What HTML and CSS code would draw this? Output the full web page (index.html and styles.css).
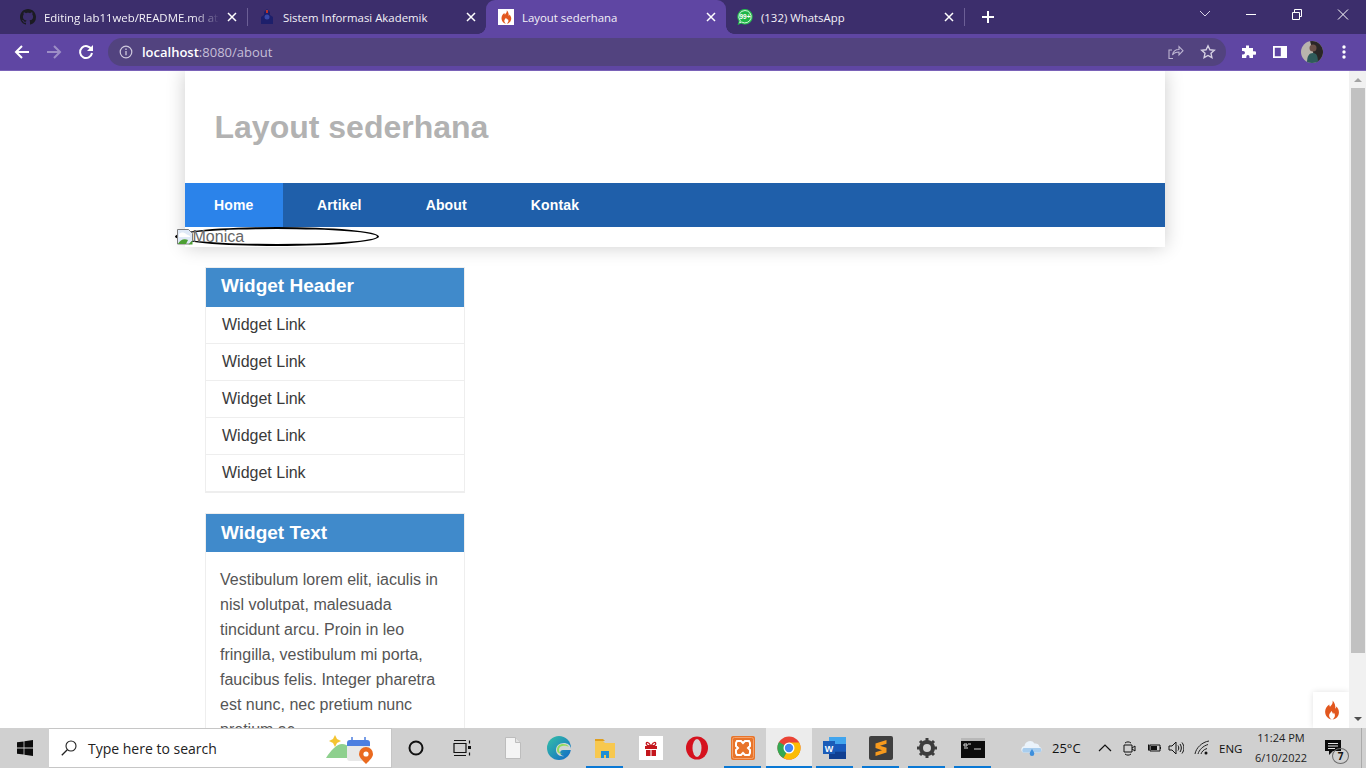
FILE: index.html
```html
<!DOCTYPE html>
<html lang="en">
<head>
<meta charset="utf-8">
<title>Layout sederhana</title>
<link rel="stylesheet" href="styles.css">
</head>
<body>
<svg class="sprite" aria-hidden="true">
  <symbol id="flame" viewBox="0 0 16 18">
    <path fill="#e2571e" d="M9 0c.6 3-1.200 4.400-2.400 6-.5-.8-.7-1.400-.7-2.200C3.400 5.600 2 8 2 10.600 2 14.500 5 17.500 8.300 18c-1.700-1-2.800-2.600-2.500-4.300.3-1.500 1.500-2.300 2.100-3.700 1 1 .9 2 1.700 2.800.4-.5.500-1 .5-1.500 1.100 1.300 1.400 2.700.9 4-.4 1-1.100 1.700-2.100 2.700C12.600 17.500 15 14.500 15 11c0-2.600-1.400-4.200-2.400-5.400-.1 1-.4 1.700-1 2.200C11.900 4.800 11 2 9 0z"/>
  </symbol>
  <symbol id="x" viewBox="0 0 10 10">
    <path d="M1 1l8 8M9 1L1 9" fill="none" stroke="currentColor" stroke-width="1.500"/>
  </symbol>
</svg>

<div class="screen">
  <header class="browser">
    <div class="tabstrip">
      <div class="tab">
        <svg class="fav" viewBox="0 0 16 16"><path fill="#1b1b22" d="M8 0C3.580 0 0 3.580 0 8c0 3.540 2.290 6.530 5.470 7.590.4.070.55-.17.55-.38 0-.19-.01-.82-.01-1.490-2.010.37-2.530-.49-2.690-.94-.09-.23-.48-.94-.82-1.130-.28-.15-.68-.52-.01-.53.63-.01 1.080.58 1.230.82.720 1.210 1.870.870 2.330.66.070-.52.280-.87.510-1.070-1.780-.2-3.640-.89-3.640-3.950 0-.87.310-1.590.820-2.150-.08-.2-.36-1.020.08-2.120 0 0 .67-.21 2.200.82.640-.18 1.320-.27 2-.27s1.360.09 2 .27c1.530-1.040 2.200-.82 2.200-.82.440 1.100.160 1.920.080 2.120.510.560.820 1.270.820 2.150 0 3.070-1.870 3.750-3.650 3.950.290.250.540.730.540 1.480 0 1.070-.01 1.930-.01 2.200 0 .21.150.460.550.380A8.013 8.013 0 0 0 16 8c0-4.420-3.580-8-8-8z"/></svg>
        <span class="tab-title fade">Editing lab11web/README.md at master</span>
        <svg class="tab-x"><use href="#x"/></svg>
      </div>
      <i class="tab-sep"></i>
      <div class="tab">
        <svg class="fav" viewBox="0 0 16 16"><path fill="#1d1f6b" d="M8 0l3 3v3l3 2v7H2V8l3-2V3z"/><circle cx="8" cy="8" r="2.500" fill="#3848a8"/><path fill="#b8322c" d="M7 1h2v3H7z"/></svg>
        <span class="tab-title">Sistem Informasi Akademik</span>
        <svg class="tab-x"><use href="#x"/></svg>
      </div>
      <div class="tab tab-active">
        <span class="fav fav-white"><svg class="fav-flame"><use href="#flame"/></svg></span>
        <span class="tab-title">Layout sederhana</span>
        <svg class="tab-x"><use href="#x"/></svg>
      </div>
      <div class="tab tab-after">
        <svg class="fav" viewBox="0 0 16 16"><path d="M8 0a7.700 7.700 0 0 1 0 15.400c-1.400 0-2.700-.4-3.800-1L.6 16l1.200-3.800A7.700 7.700 0 0 1 8 0z" fill="#25c04e"/><path d="M8 1.500a6.200 6.200 0 1 1-3.300 11.500l-2 .7.600-2A6.200 6.200 0 0 1 8 1.500z" fill="#1fb548" stroke="#fff" stroke-width=".8"/><text x="8" y="10" class="wa-text">99+</text></svg>
        <span class="tab-title">(132) WhatsApp</span>
        <svg class="tab-x"><use href="#x"/></svg>
      </div>
      <i class="tab-sep tab-sep-end"></i>
      <svg class="newtab" viewBox="0 0 14 14"><path d="M7 1v12M1 7h12" fill="none" stroke="#fff" stroke-width="2"/></svg>
      <div class="winctl">
        <svg viewBox="0 0 46 30"><path d="M18 11l5 5 5-5" fill="none" stroke="#d8d3e6" stroke-width="1"/></svg>
        <svg viewBox="0 0 46 30"><path d="M18 14.500h10" stroke="#fff" stroke-width="1"/></svg>
        <svg viewBox="0 0 46 30"><path d="M18.500 12.500h7v7h-7zM20.500 12v-2.500h7v7H26" fill="none" stroke="#fff" stroke-width="1"/></svg>
        <svg viewBox="0 0 46 30"><path d="M18 9.500l10 10M28 9.500l-10 10" stroke="#fff" stroke-width="1"/></svg>
      </div>
    </div>
    <div class="toolbar">
      <svg class="tb-icon" viewBox="0 0 16 16"><path d="M15 8H2M8 2L2 8l6 6" fill="none" stroke="#fff" stroke-width="2"/></svg>
      <svg class="tb-icon" viewBox="0 0 16 16"><path d="M1 8h13M8 2l6 6-6 6" fill="none" stroke="#9d8ec6" stroke-width="2"/></svg>
      <svg class="tb-icon" viewBox="0 0 16 16"><path d="M13.500 5.500A6 6 0 1 0 14 9" fill="none" stroke="#fff" stroke-width="2"/><path d="M15 1v6H9z" fill="#fff"/></svg>
      <div class="omnibox">
        <svg class="omni-info" viewBox="0 0 14 14"><circle cx="7" cy="7" r="5.800" fill="none" stroke="#cfc9dd" stroke-width="1.200"/><path d="M7 6v4.200M7 3.600v1.300" stroke="#cfc9dd" stroke-width="1.300"/></svg>
        <span class="url"><b>localhost</b>:8080/about</span>
        <svg class="omni-act" viewBox="0 0 16 16"><path d="M5 14.500H1V6h3M4.500 11c.6-3.500 3-5.500 6.500-5.500V2.500l4 4.200-4 4.200V8c-3 0-5 .8-6.500 3z" fill="none" stroke="#bdb5d2" stroke-width="1.100"/></svg>
        <svg class="omni-act" viewBox="0 0 16 16"><path d="M8 1.800l1.900 4 4.400.5-3.300 3 .9 4.400L8 11.500l-3.900 2.200.9-4.400-3.300-3 4.400-.5z" fill="none" stroke="#d6d1e3" stroke-width="1.400"/></svg>
      </div>
      <svg class="tb-icon" viewBox="0 0 16 16"><path fill="#fff" d="M6 1.500h3V4h4v3.200h1.500a1.800 1.800 0 0 1 0 3.600H13V14H9.500v-1.300a1.600 1.600 0 0 0-3.200 0V14H2v-3.500h1.200a1.800 1.800 0 0 0 0-3.600H2V4h4z"/></svg>
      <svg class="tb-icon" viewBox="0 0 16 16"><path fill="#fff" fill-rule="evenodd" d="M1 2h14v12H1zM2.800 3.800v8.400h6V3.800z"/></svg>
      <span class="avatar"><svg viewBox="0 0 22 22"><rect width="22" height="22" fill="#b9b4ad"/><path d="M9 0h13v22H15z" fill="#2a2626"/><path d="M6 22c0-7 2-10 6-10s5 4 5 10z" fill="#2e5b5a"/><circle cx="12" cy="7" r="3.500" fill="#6b5148"/></svg></span>
      <svg class="tb-icon" viewBox="0 0 16 16"><g fill="#fff"><circle cx="8" cy="3" r="1.700"/><circle cx="8" cy="8" r="1.700"/><circle cx="8" cy="13" r="1.700"/></g></svg>
    </div>
  </header>

  <div class="viewport">
    <main class="page">
      <div class="container">
        <div class="site-head"><h1>Layout sederhana</h1></div>
        <nav class="site-nav">
          <a class="active">Home</a>
          <a>Artikel</a>
          <a>About</a>
          <a>Kontak</a>
        </nav>
        <div class="hero">
          <div class="broken">
            <svg class="broken-ico" viewBox="0 0 16 16"><path d="M.5.500h11l4 4v7l-3 3.500H.5z" fill="#dfe9f7" stroke="#7d7d7d"/><path d="M2 5c2-2 5-2 7 0 1 1 3 1 4 2v1H2z" fill="#fff"/><path d="M1 15c2-4 6-6 10-4l-2 4z" fill="#4c9f32"/><path d="M11.500 15.500l4-4v4z" fill="#4c9f32"/></svg>
            <span>Monica</span>
          </div>
        </div>
      </div>
      <aside class="sidebar">
        <section class="widget widget-links">
          <h3 class="widget-title">Widget Header</h3>
          <ul class="links">
            <li>Widget Link</li>
            <li>Widget Link</li>
            <li>Widget Link</li>
            <li>Widget Link</li>
            <li>Widget Link</li>
          </ul>
        </section>
        <section class="widget widget-text">
          <h3 class="widget-title">Widget Text</h3>
          <p>Vestibulum lorem elit, iaculis in nisl volutpat, malesuada tincidunt arcu. Proin in leo fringilla, vestibulum mi porta, faucibus felis. Integer pharetra est nunc, nec pretium nunc pretium ac.</p>
        </section>
      </aside>
      <div class="ci-badge"><svg><use href="#flame"/></svg></div>
    </main>
    <div class="scrollbar">
      <i class="arrow arrow-up"></i>
      <div class="track"><div class="thumb"></div></div>
      <i class="arrow arrow-down"></i>
    </div>
  </div>

  <footer class="taskbar">
    <div class="start"><svg viewBox="0 0 16 16"><path fill="#0c0c0c" d="M0 2.300l6.600-.9v6.200H0zM7.400 1.300L16 0v7.600H7.400zM0 8.400h6.600v6.200L0 13.700zM7.400 8.400H16V16l-8.600-1.200z"/></svg></div>
    <div class="search">
      <svg class="search-ico" viewBox="0 0 16 16"><circle cx="10" cy="6" r="5" fill="none" stroke="#222" stroke-width="1.100"/><path d="M6.300 9.700L.8 15.200" stroke="#222" stroke-width="1.300"/></svg>
      <span class="search-text">Type here to search</span>
      <svg class="search-art" viewBox="0 0 50 32"><path d="M0 26c5-8 11-14 16-14 6 0 11 6 14 14z" fill="#8ed08e"/><path d="M7 7l2-4 2 4 4 2-4 2-2 4-2-4-4-2z" fill="#f4c430"/><rect x="21" y="8" width="23" height="21" rx="3" fill="#e8e8e8"/><path d="M21 11a3 3 0 0 1 3-3h17a3 3 0 0 1 3 3v3H21z" fill="#4c7fe0"/><path d="M26 5v5M39 5v5" stroke="#4c7fe0" stroke-width="1.500"/><path d="M40 32c-4-4-7-7-7-10a7 7 0 0 1 14 0c0 3-3 6-7 10z" fill="#ea6a1f"/><circle cx="40" cy="22" r="2.600" fill="#fff"/></svg>
    </div>
    <div class="tb-items">
      <div class="item"><svg viewBox="0 0 24 24"><circle cx="12" cy="12" r="6.500" fill="none" stroke="#111" stroke-width="2"/></svg></div>
      <div class="item"><svg viewBox="0 0 24 24"><path d="M4 7.500h12v9H4zM4 4.500h12M4 19.500h12M19.500 4.500v3M19.500 16.500v3" fill="none" stroke="#111" stroke-width="1.200"/><rect x="18" y="10" width="3" height="3" fill="#111"/></svg></div>
      <div class="item item-gap"><svg viewBox="0 0 24 24"><path d="M4.500 1.500h10l5 5v16h-15z" fill="#f4f4f4" stroke="#bdbdbd"/><path d="M14.500 1.500v5h5" fill="#e2e2e2" stroke="#bdbdbd"/></svg></div>
      <div class="item"><svg viewBox="0 0 24 24"><defs><linearGradient id="edge" x1="0" y1="0" x2="1" y2="1"><stop offset="0" stop-color="#35c1a6"/><stop offset="1" stop-color="#1068c8"/></linearGradient></defs><circle cx="12" cy="12" r="12" fill="url(#edge)"/><path d="M24 13c0-4-4-6-7-6-5 0-8 3-8 7 0 4 4 7 8 6-5 0-5-6-1-6h8z" fill="#d4d4d4"/><path d="M10 14c0-4 3-6 6-6 3 0 5 1 6 3-1-1-10-3-10 3 0 2 2 4 4 4-3 0-6-1-6-4z" fill="#8fdc5c"/></svg></div>
      <div class="item item-open"><svg viewBox="0 0 24 24"><path d="M2 5h8l2 2h10v15H2z" fill="#f7c84f"/><path d="M2 3h8l2 2H2z" fill="#e09f1e"/><path d="M8 22v-7h8v7h-3v-3h-2v3z" fill="#1f8fd6"/></svg></div>
      <div class="item"><svg viewBox="0 0 24 24"><rect width="24" height="24" fill="#fff"/><path d="M6 10h12v3H6zM7 14h4.500v6H7zM12.500 14H17v6h-4.500z" fill="#c4161c"/><path d="M12 10C9 5 6.500 6 7.500 8.500 8.200 10 12 10 12 10zm0 0c3-5 5.500-4 4.500-1.500C15.800 10 12 10 12 10z" fill="none" stroke="#c4161c" stroke-width="1.300"/></svg></div>
      <div class="item"><svg viewBox="0 0 24 24"><ellipse cx="12" cy="12" rx="11" ry="11.500" fill="#d5121e"/><ellipse cx="12" cy="12" rx="4.500" ry="9" fill="#d4d4d4"/></svg></div>
      <div class="item item-open"><svg viewBox="0 0 24 24"><rect width="24" height="24" rx="2" fill="#e8742a"/><rect x="1.500" y="1.500" width="21" height="21" rx="2" fill="none" stroke="#f5a36c"/><path d="M6 5h4l2 2 2-2h4l1 2v3l-2 2 2 2v3l-1 2h-4l-2-2-2 2H6l-1-2v-3l2-2-2-2V7z" fill="none" stroke="#fff" stroke-width="2"/></svg></div>
      <div class="item item-active item-open"><svg viewBox="0 0 24 24"><circle cx="12" cy="12" r="11.500" fill="#ea4335"/><path d="M12 12L22 18A11.500 11.500 0 0 1 6.300 22z" fill="#fbbc05"/><path d="M12 12L6.500 22A11.500 11.500 0 0 1 2 6z" fill="#34a853"/><path d="M12 6.500h10.200A11.500 11.500 0 0 1 18 21.800L12 12z" fill="#fbbc05"/><circle cx="12" cy="12" r="5.500" fill="#fff"/><circle cx="12" cy="12" r="4.200" fill="#4285f4"/></svg></div>
      <div class="item item-open"><svg viewBox="0 0 24 24"><path d="M6 1h17v22H6z" fill="#2b7cd3"/><path d="M6 8h17v7.500H6z" fill="#185abd"/><path d="M6 15.500h17V23H6z" fill="#103f91"/><path d="M6 1h17v7H6z" fill="#41a5ee"/><rect x="0" y="5" width="12" height="13" fill="#1a5cb8"/><text x="6" y="15.500" class="w-letter">W</text></svg></div>
      <div class="item item-open"><svg viewBox="0 0 24 24"><rect width="24" height="24" rx="2" fill="#3f3f3f"/><path d="M17.500 4L6.500 7.500V12L13 14.200 6.500 16.300V20L17.500 16.500V11.800L11 9.700 17.500 7.700z" fill="#f79a1d"/></svg></div>
      <div class="item item-open"><svg viewBox="0 0 24 24"><circle cx="12" cy="12" r="6" fill="none" stroke="#3d3d3d" stroke-width="4"/><path d="M12 2v4M12 18v4M2 12h4M18 12h4M5 5l3 3M16 16l3 3M19 5l-3 3M8 16l-3 3" stroke="#3d3d3d" stroke-width="3"/></svg></div>
      <div class="item item-open"><svg viewBox="0 0 24 24"><rect y="2" width="24" height="20" fill="#0c0c0c"/><rect y="2" width="24" height="3" fill="#b8b8b8"/><path d="M3 8h3v2H3zM7 8h3M3 12h4M13 13h7" stroke="#d8d8d8" fill="none"/></svg></div>
    </div>
    <div class="tray">
      <svg class="tray-weather" viewBox="0 0 22 18"><path d="M2 13.500a3.500 3.500 0 0 1 1.500-6.500 5.500 5.500 0 0 1 10-2.500 4.500 4.500 0 0 1 5 3.200 3.200 3.200 0 0 1 .5 5.800z" fill="#eaf3fb"/><path d="M2 13.500a3.500 3.500 0 0 1 .5-4.500h17a3.200 3.200 0 0 1-.5 4.500z" fill="#a8cdee"/><path d="M11 10c1.800 2.800 2.300 3.600 2.300 4.700a2.300 2.300 0 0 1-4.600 0c0-1.100.5-1.900 2.300-4.700z" fill="#3d8fdc"/></svg>
      <span class="temp">25°C</span>
      <svg class="tray-ico tray-chev" viewBox="0 0 16 16"><path d="M2 11l6-6 6 6" fill="none" stroke="#111" stroke-width="1.200"/></svg>
      <svg class="tray-ico" viewBox="0 0 16 16"><path d="M3 5h8v7H3zM11 8l3-2v5l-3-2M4 3c2-1.500 4-1.500 6 0M4 14c2 1.500 4 1.500 6 0" fill="none" stroke="#111" stroke-width="1"/></svg>
      <svg class="tray-ico" viewBox="0 0 16 16"><path d="M5 5h10v6H5z" fill="none" stroke="#111"/><path d="M6 6h6v4H6zM15 7h1v2h-1zM0 6h3M0 9h3M3 4.500h1.500v6H3z" fill="#111"/></svg>
      <svg class="tray-ico tray-vol" viewBox="0 0 16 16"><path d="M1 6h3l4-4v12l-4-4H1zM10 5.500c1 1.500 1 3.500 0 5M12 4c1.800 2.500 1.800 5.500 0 8M14 2.500c2.500 3.500 2.500 7.500 0 11" fill="none" stroke="#111"/></svg>
      <svg class="tray-ico tray-wifi" viewBox="0 0 16 16"><path d="M1 14C2 8 8 2 15 1M4 14c1-4 5-8 10-9.500M7 14c.6-2 2.500-4.500 6-5.500" fill="none" stroke="#222"/><circle cx="12" cy="13" r="1.500" fill="#111"/></svg>
      <span class="lang">ENG</span>
      <div class="clock"><span>11:24 PM</span><span>6/10/2022</span></div>
      <div class="notif">
        <svg viewBox="0 0 16 16"><path d="M0 0h16v11H8l-4 4v-4H0z" fill="#0b0b0b"/><path d="M3 3.500h10M3 6h10M3 8.500h7" stroke="#e4e4e4"/></svg>
        <span class="notif-badge">7</span>
      </div>
      <i class="show-desktop"></i>
    </div>
  </footer>
</div>
</body>
</html>
```

FILE: styles.css
```css
* { box-sizing: border-box; }
html, body { margin: 0; padding: 0; height: 100%; overflow: hidden; }
body { font-family: "Liberation Sans", Arial, sans-serif; background: #fff; color: #333; }
.sprite { display: none; }
.screen { width: 1366px; height: 768px; display: flex; flex-direction: column; overflow: hidden; }

/* browser chrome */
.browser { flex: 0 0 71px; display: flex; flex-direction: column; font-family: "Open Sans", "Noto Sans", sans-serif; }
.tabstrip { flex: 0 0 34px; background: #3c2e6c; display: flex; align-items: flex-end; padding-left: 8px; position: relative; color: #fff; }
.tab { width: 239px; height: 34px; display: flex; align-items: center; padding: 0 10px 0 12px; gap: 8px; flex: 0 0 auto; }
.tab-active { background: #5f46a3; border-radius: 9px 9px 0 0; width: 240px; position: relative; }
.tab-active::before, .tab-active::after { content: ""; position: absolute; bottom: 0; width: 8px; height: 8px; }
.tab-active::before { left: -8px; background: radial-gradient(circle at 0 0, transparent 7.500px, #5f46a3 8px); }
.tab-active::after { right: -8px; background: radial-gradient(circle at 100% 0, transparent 7.500px, #5f46a3 8px); }
.tab-after { width: 238px; padding-left: 11px; }
.fav { width: 16px; height: 16px; flex: 0 0 16px; display: block; }
.fav-white { background: #fff; display: flex; align-items: center; justify-content: center; }
.fav-flame { width: 12px; height: 14px; }
.wa-text { font: 700 6.500px "Liberation Sans", sans-serif; fill: #fff; text-anchor: middle; }
.tab-title { flex: 1; font-size: 11.400px; white-space: nowrap; overflow: hidden; color: #f3f1f8; min-width: 0; }
.fade { -webkit-mask-image: linear-gradient(90deg, #000 150px, transparent 176px); mask-image: linear-gradient(90deg, #000 150px, transparent 176px); }
.tab-x { width: 10px; height: 10px; flex: 0 0 10px; color: #fff; }
.tab-sep { width: 1px; height: 18px; background: #6c5f96; align-self: center; margin-right: -1px; flex: 0 0 1px; }
.tab-sep-end { margin-right: 0; }
.newtab { width: 14px; height: 14px; margin: 0 0 10px 16px; flex: 0 0 14px; }
.winctl { margin-left: auto; display: flex; align-self: flex-start; }
.winctl svg { width: 46px; height: 30px; display: block; }
.toolbar { flex: 0 0 37px; background: #5f46a3; border-bottom: 1px solid #7a62b8; display: flex; align-items: flex-start; padding-top: 4px; }
.tb-icon { width: 16px; height: 16px; flex: 0 0 16px; margin: 6px 8px; }
.toolbar > .tb-icon:nth-child(-n+3) { margin-left: 14px; margin-right: 2px; }
.omnibox { flex: 0 0 1118px; margin: 0 6px 0 12px; height: 28px; border-radius: 14px; background: #52437f; display: flex; align-items: center; padding: 0 10px 0 11px; }
.omni-info { width: 14px; height: 14px; flex: 0 0 14px; }
.url { margin-left: 9px; font-size: 13px; color: #c6bfd8; flex: 1; white-space: nowrap; }
.url b { font-weight: 600; color: #fff; }
.omni-act { width: 16px; height: 16px; margin-left: 16px; flex: 0 0 16px; }
.avatar { width: 22px; height: 22px; margin: 3px 5px 0; border-radius: 50%; overflow: hidden; flex: 0 0 22px; }
.avatar svg { width: 22px; height: 22px; display: block; }

/* viewport */
.viewport { flex: 0 0 657px; display: flex; min-height: 0; }
.page { flex: 0 0 1349px; position: relative; overflow: hidden; background: #fff; }
.container { width: 980px; margin: 0 auto; background: #fff; box-shadow: 0 0 18px rgba(0,0,0,.2); }
.site-head { height: 112px; padding: 36px 30px 0; }
.site-head h1 { margin: 0; font-size: 32px; line-height: 40px; font-weight: 700; color: #b2b2b2; }
.site-nav { height: 44px; background: #1f5faa; display: flex; gap: 4px; }
.site-nav a { padding: 0 30px; line-height: 44px; font-size: 14px; font-weight: 700; color: #fff; letter-spacing: .15px; }
.site-nav a.active { background: #2b83ea; padding: 0 29.500px; }
.hero { height: 20px; background: #fff; }
.broken { width: 204px; height: 19px; margin-left: -10px; border: 2px solid #000; border-radius: 50%; display: flex; align-items: flex-start; font-size: 16px; line-height: 18px; color: #666; }
.broken-ico { width: 16px; height: 16px; flex: 0 0 16px; }
.broken span { margin-top: -1px; }

.sidebar { width: 260px; margin: 20px 0 0 205px; display: flex; flex-direction: column; gap: 20px; }
.widget { border: 1px solid #eee; background: #fff; }
.widget-title { margin: 0; background: #408acb; color: #fff; font-size: 19px; font-weight: 700; height: 38px; line-height: 37px; padding-left: 15px; }
.widget-links .widget-title { height: 39px; line-height: 36px; }
.widget-links { border-bottom-width: 2px; }
.links { list-style: none; margin: 0; padding: 0; }
.links li { height: 37px; line-height: 35px; padding-left: 16px; font-size: 16px; color: #3a3a3a; border-bottom: 1px solid #eee; }
.links li:last-child { border-bottom: none; height: 36px; }
.widget-text p { margin: 0; padding: 15px 14px; font-size: 16px; line-height: 25px; color: #555; }
.ci-badge { position: absolute; right: 0; bottom: 0; width: 36px; height: 36px; background: #fff; box-shadow: 0 0 6px rgba(0,0,0,.12); display: flex; align-items: center; justify-content: center; }
.ci-badge svg { width: 17px; height: 20px; }

.scrollbar { flex: 0 0 17px; background: #f1f1f1; display: flex; flex-direction: column; align-items: center; }
.track { flex: 1; width: 100%; padding: 0 1px 0 2px; }
.thumb { height: 565px; background: #c1c1c1; }
.arrow { width: 0; height: 0; flex: 0 0 auto; border-left: 4px solid transparent; border-right: 4px solid transparent; }
.arrow-up { border-bottom: 4px solid #a3a3a3; margin: 7px 0 6px; }
.arrow-down { border-top: 4px solid #505050; margin: 6px 0 7px; }

/* taskbar */
.taskbar { flex: 0 0 40px; background: #d0d0d0; display: flex; align-items: stretch; font-family: "Open Sans", "Noto Sans", sans-serif; color: #111; }
.start { flex: 0 0 49px; display: flex; align-items: center; justify-content: center; }
.start svg { width: 16px; height: 16px; }
.search { flex: 0 0 343px; background: #fff; border: 1px solid #c6c6c6; border-left: 0; display: flex; align-items: center; padding-left: 12px; }
.search-ico { width: 16px; height: 16px; flex: 0 0 16px; }
.search-text { margin-left: 11px; font-size: 14px; color: #222; white-space: nowrap; }
.search-art { width: 50px; height: 32px; margin-left: auto; margin-right: 15px; }
.tb-items { display: flex; margin-left: 1px; }
.item { width: 46px; display: flex; align-items: center; justify-content: center; position: relative; }
.item svg { width: 24px; height: 24px; display: block; }
.item-gap { margin-left: 5px; }
.item-active { background: #ececec; }
.item-open::after { content: ""; position: absolute; left: 4px; right: 5px; bottom: 0; height: 2px; background: #0a78d4; }
.item-active::after { left: 0; right: 0; }
.w-letter { font: 700 9px "Liberation Sans", sans-serif; fill: #fff; text-anchor: middle; }
.tray { margin-left: auto; display: flex; align-items: center; }
.tray-weather { width: 22px; height: 18px; margin-right: 9px; flex: 0 0 22px; }
.temp { font-size: 13px; width: 41px; }
.tray-ico { width: 16px; height: 16px; margin: 0 4px; flex: 0 0 16px; }
.tray-vol { margin-left: 3px; }
.tray-wifi { margin-left: 6px; }
.lang { font-size: 11.500px; width: 31px; margin-left: 5px; }
.clock { width: 62px; display: flex; flex-direction: column; align-items: center; font-size: 11px; line-height: 20px; color: #222; }
.notif { width: 42px; height: 40px; display: flex; align-items: center; justify-content: center; position: relative; }
.notif svg { width: 16px; height: 16px; margin-top: -1px; }
.notif-badge { position: absolute; left: 20px; top: 20px; width: 17px; height: 16px; border-radius: 50%; border: 1px solid #6a6a6a; font-size: 10px; font-weight: 700; line-height: 14px; text-align: center; }
.show-desktop { width: 1px; height: 40px; background: #aaa; margin: 0 4px 0 7px; }
```
